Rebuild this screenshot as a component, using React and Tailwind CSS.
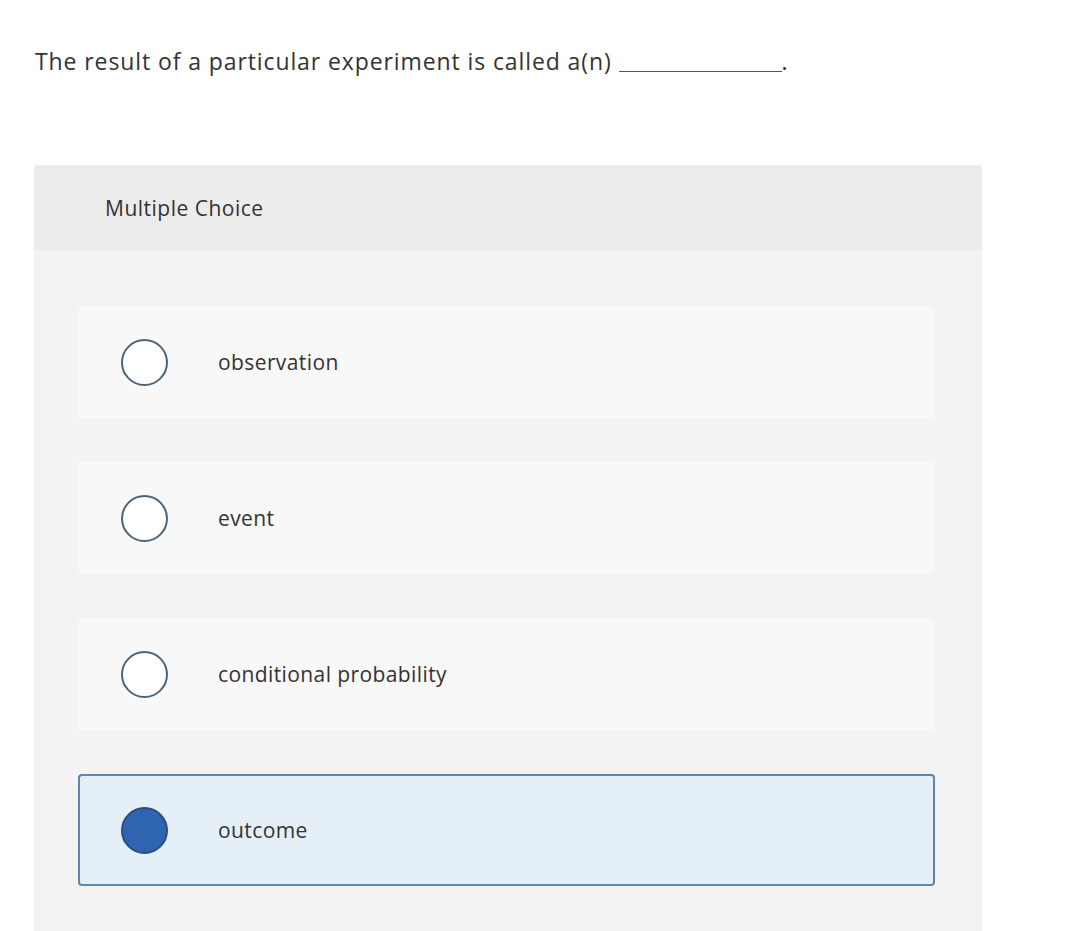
const options = [
  { label: 'observation', selected: false },
  { label: 'event', selected: false },
  { label: 'conditional probability', selected: false },
  { label: 'outcome', selected: true },
]

export default function App() {
  return (
    <div className="min-h-[931px] bg-white font-['Open_Sans',sans-serif] text-[#333]">
      <div className="pl-[35px] pt-[45px] text-[23px] leading-[32px] tracking-[0.9px]">
        The result of a particular experiment is called a(n){' '}
        <span className="inline-block w-[163px] border-b border-[#555] align-[-2px]"></span>.
      </div>

      <div className="mt-[88px] ml-[34px] w-[948px] rounded-t-[4px] overflow-hidden">
        <div className="h-[85px] bg-[#ececec] pl-[71px] pt-[3px] flex items-center text-[21px] tracking-[0.5px]">Multiple Choice</div>
        <div className="bg-[#f3f3f3] pl-[44px] pr-[47px] pt-[56px] pb-[60px] flex flex-col gap-[44px]">
          {options.map(({ label, selected }) => (
            <div
              key={label}
              className={
                selected
                  ? 'h-[112px] rounded-[4px] border-2 border-[#5b86ad] bg-[#e5eff8] flex items-center pl-[41px]'
                  : 'h-[112px] rounded-[4px] border-2 border-transparent bg-[#f8f8f8] flex items-center pl-[41px]'
              }
            >
              <span
                className={
                  selected
                    ? 'w-[47px] h-[47px] rounded-full border-2 border-[#2b4f7c] bg-[#2f65b0]'
                    : 'w-[47px] h-[47px] rounded-full border-2 border-[#4b6478] bg-white'
                }
              ></span>
              <span className="ml-[50px] pt-[2px] text-[21px] tracking-[0.4px]">{label}</span>
            </div>
          ))}
        </div>
      </div>
    </div>
  )
}
